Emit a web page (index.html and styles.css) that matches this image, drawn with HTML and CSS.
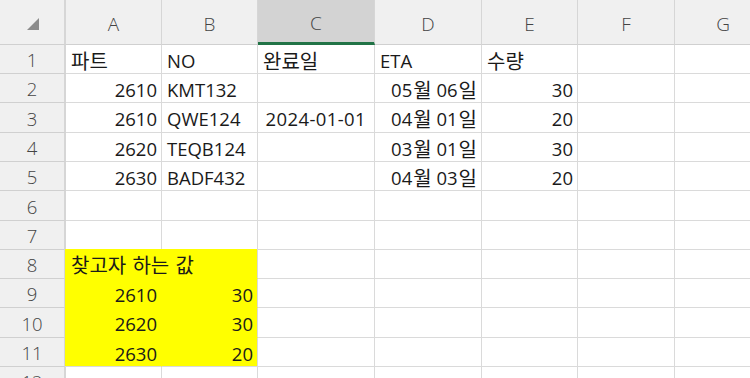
FILE: index.html
```html
<!DOCTYPE html>
<html lang="ko">
<head>
<meta charset="utf-8">
<title>Sheet</title>
<link rel="stylesheet" href="styles.css">
</head>
<body>
<div class="sheet">
  <div class="corner"><span class="tri"></span></div>
  <div class="colhead">A</div>
  <div class="colhead">B</div>
  <div class="colhead selected">C</div>
  <div class="colhead">D</div>
  <div class="colhead">E</div>
  <div class="colhead">F</div>
  <div class="colhead">G</div>

  <div class="rowhead">1</div>
  <div class="cell ko">파트</div>
  <div class="cell">NO</div>
  <div class="cell ko">완료일</div>
  <div class="cell">ETA</div>
  <div class="cell ko">수량</div>
  <div class="cell"></div>
  <div class="cell"></div>

  <div class="rowhead">2</div>
  <div class="cell num">2610</div>
  <div class="cell">KMT132</div>
  <div class="cell"></div>
  <div class="cell num">05<span class="k">월</span>&nbsp;06<span class="k">일</span></div>
  <div class="cell num">30</div>
  <div class="cell"></div>
  <div class="cell"></div>

  <div class="rowhead">3</div>
  <div class="cell num">2610</div>
  <div class="cell">QWE124</div>
  <div class="cell num date">2024-01-01</div>
  <div class="cell num">04<span class="k">월</span>&nbsp;01<span class="k">일</span></div>
  <div class="cell num">20</div>
  <div class="cell"></div>
  <div class="cell"></div>

  <div class="rowhead">4</div>
  <div class="cell num">2620</div>
  <div class="cell">TEQB124</div>
  <div class="cell"></div>
  <div class="cell num">03<span class="k">월</span>&nbsp;01<span class="k">일</span></div>
  <div class="cell num">30</div>
  <div class="cell"></div>
  <div class="cell"></div>

  <div class="rowhead">5</div>
  <div class="cell num">2630</div>
  <div class="cell">BADF432</div>
  <div class="cell"></div>
  <div class="cell num">04<span class="k">월</span>&nbsp;03<span class="k">일</span></div>
  <div class="cell num">20</div>
  <div class="cell"></div>
  <div class="cell"></div>

  <div class="rowhead">6</div>
  <div class="cell"></div>
  <div class="cell"></div>
  <div class="cell"></div>
  <div class="cell"></div>
  <div class="cell"></div>
  <div class="cell"></div>
  <div class="cell"></div>

  <div class="rowhead">7</div>
  <div class="cell"></div>
  <div class="cell"></div>
  <div class="cell"></div>
  <div class="cell"></div>
  <div class="cell"></div>
  <div class="cell"></div>
  <div class="cell"></div>

  <div class="rowhead">8</div>
  <div class="cell ko hl hl-l hl-top spill">찾고자 하는 값</div>
  <div class="cell hl hl-r hl-top"></div>
  <div class="cell"></div>
  <div class="cell"></div>
  <div class="cell"></div>
  <div class="cell"></div>
  <div class="cell"></div>

  <div class="rowhead">9</div>
  <div class="cell num hl hl-l">2610</div>
  <div class="cell num hl hl-r">30</div>
  <div class="cell"></div>
  <div class="cell"></div>
  <div class="cell"></div>
  <div class="cell"></div>
  <div class="cell"></div>

  <div class="rowhead">10</div>
  <div class="cell num hl hl-l">2620</div>
  <div class="cell num hl hl-r">30</div>
  <div class="cell"></div>
  <div class="cell"></div>
  <div class="cell"></div>
  <div class="cell"></div>
  <div class="cell"></div>

  <div class="rowhead">11</div>
  <div class="cell num hl hl-l hl-bottom">2630</div>
  <div class="cell num hl hl-r hl-bottom">20</div>
  <div class="cell"></div>
  <div class="cell"></div>
  <div class="cell"></div>
  <div class="cell"></div>
  <div class="cell"></div>

  <div class="rowhead">12</div>
  <div class="cell"></div>
  <div class="cell"></div>
  <div class="cell"></div>
  <div class="cell"></div>
  <div class="cell"></div>
  <div class="cell"></div>
  <div class="cell"></div>
</div>
</body>
</html>
```

FILE: styles.css
```css
* { box-sizing: border-box; }

html, body {
  margin: 0;
  padding: 0;
  background: #ffffff;
  overflow: hidden;
}

body {
  width: 750px;
  height: 378px;
  font-family: "Open Sans", "Noto Sans CJK KR", sans-serif;
  font-size: 18.5px;
  color: #1a1a1a;
}

.sheet {
  display: grid;
  grid-template-columns: 66px 96px 96px 117px 107px 96px 97px 97px;
  grid-template-rows: 45px 29px 29px 30px 29px 29px 30px 29px 29px 29px 30px 29px 29px;
  width: 848px;
}

.corner,
.colhead,
.rowhead {
  background: #f0f0f0;
  border-right: 1px solid #d6d6d6;
  border-bottom: 1px solid #d0d0d0;
  display: flex;
  align-items: center;
  justify-content: center;
  color: #444;
  font-weight: 300;
}

.corner {
  position: relative;
  border-right-width: 2px;
}

.tri {
  position: absolute;
  left: 27px;
  top: 18px;
  width: 0;
  height: 0;
  border-left: 12px solid transparent;
  border-bottom: 12px solid #8c8c8c;
}

.colhead {
  font-size: 19px;
  padding-top: 4px;
}

.colhead.selected {
  background: #d3d3d3;
  border-bottom: 3px solid #217346;
}

.rowhead {
  font-size: 18.5px;
  border-right-width: 2px;
  padding-top: 1px;
}

.cell {
  border-right: 1px solid #dadada;
  border-bottom: 1px solid #dadada;
  display: flex;
  align-items: center;
  padding: 2px 5px 0 5px;
  white-space: nowrap;
  overflow: visible;
  position: relative;
}

.cell.ko {
  font-size: 20px;
  word-spacing: 1px;
}

.k {
  font-size: 20px;
  margin-left: 1px;
}

.cell.num {
  justify-content: flex-end;
  padding-right: 4px;
}

.cell.date {
  padding-right: 8px;
  letter-spacing: 0.4px;
}

.cell.hl {
  background: #ffff00;
  border-right-color: #ffff00;
  border-bottom-color: #ffff00;
  z-index: 1;
}

.cell.spill {
  z-index: 2;
}

.cell.hl-l {
  margin-left: -1px;
  padding-left: 6px;
}

.cell.hl-r {
  border-right-color: #dadada;
}

.cell.hl-top {
  margin-top: -1px;
}

.cell.hl-bottom {
  border-bottom-color: #dadada;
}
```
